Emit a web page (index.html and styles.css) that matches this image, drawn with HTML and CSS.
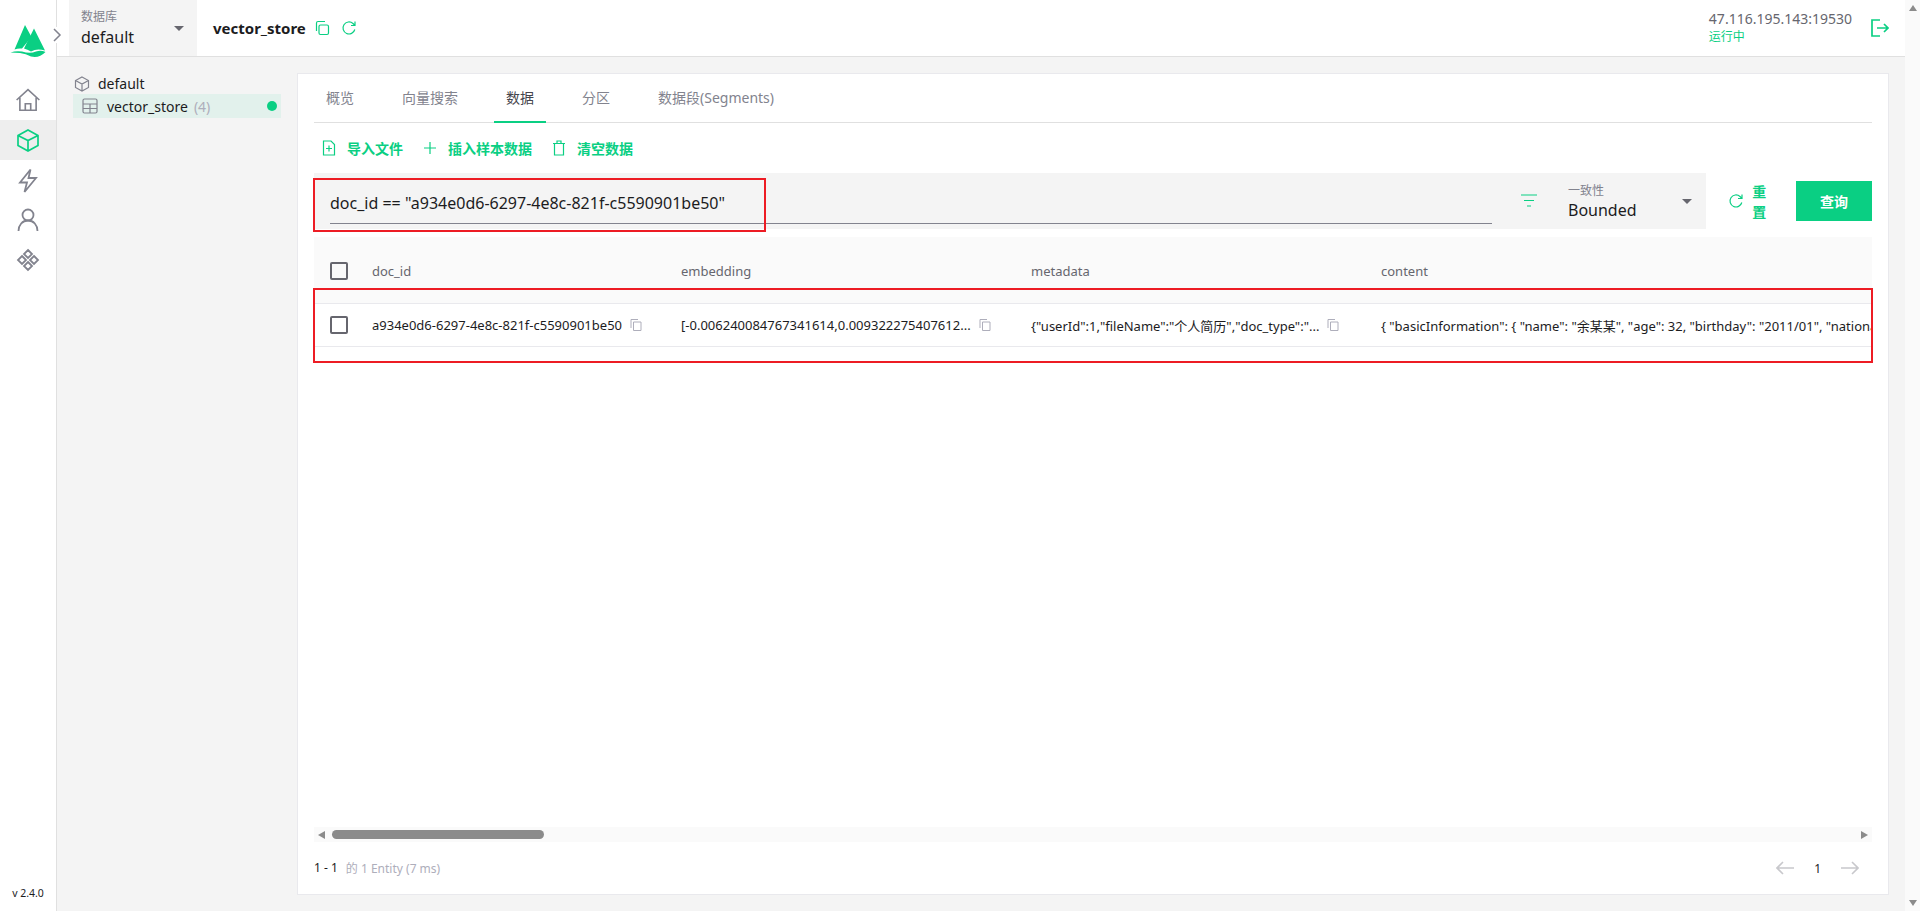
FILE: index.html
```html
<!DOCTYPE html>
<html lang="zh">
<head>
<meta charset="utf-8">
<title>Attu</title>
<link rel="stylesheet" href="styles.css">
</head>
<body>
<div class="app">
  <nav class="nav">
    <svg class="logo" viewBox="0 0 46 36" width="46" height="36"><path fill="#0acf83" d="M15 1 L21.5 13 L12 24.5 Q8 24 4.5 25.5 Z"/><path fill="#0acf83" d="M24 4.5 L35 26.5 Q27 24 21 27.5 Q17.5 25.5 14 24.5 Z"/><path fill="#0acf83" d="M0.5 28.5 Q6 26.5 12 27.5 Q20 30 26 27.5 Q31 26 35.5 28 Q29 34.5 21 32.5 Q16 29.5 10 29 Q5 28.5 0.5 28.5 Z"/></svg>
    <div class="nav-item"><svg viewBox="0 0 24 24" width="26" height="26" class="ic-grey"><path d="M1.5 12 12 2.5 22.5 12M4.5 10v11.5h15V10M9.5 21.5v-6h5v6"/></svg></div>
    <div class="nav-item active"><svg viewBox="0 0 24 24" width="24" height="24" class="ic-green"><path d="M12 2 22 7.5v10L12 23 2 17.500v-10zM2 7.500l10 5 10-5M12 12.500V23"/></svg></div>
    <div class="nav-item"><svg viewBox="0 0 24 24" width="24" height="26" class="ic-slate"><path d="M14.500 1.500 4 14.500h7L8.500 24 20 10h-7.500z"/></svg></div>
    <div class="nav-item"><svg viewBox="0 0 24 24" width="24" height="24" class="ic-slate"><circle cx="12" cy="7" r="5.500"/><path d="M2.500 23c0-6 4-10.500 9.500-10.500S21.500 17 21.500 23"/></svg></div>
    <div class="nav-item"><svg viewBox="0 0 24 24" width="24" height="24" class="ic-slate"><path d="M12 2l4 4-4 4-4-4zM6 8l4 4-4 4-4-4zM18 8l4 4-4 4-4-4zM12 14l4 4-4 4-4-4z"/></svg></div>
    <div class="version">v 2.4.0</div>
    <svg class="nav-toggle" viewBox="0 0 10 16" width="10" height="16"><path d="M2 2l6 6-6 6"/></svg>
  </nav>
  <div class="main">
    <header class="header">
      <div class="db-select">
        <span class="small-label">数据库</span>
        <span class="db-value">default</span>
        <i class="caret db-caret"></i>
      </div>
      <div class="coll-title">vector_store</div>
      <svg class="ic-green thin head-ic" viewBox="0 0 16 16" width="16" height="16"><rect x="5" y="5" width="9.500" height="9.500" rx="1.500"/><path d="M2.500 11V3a1.500 1.500 0 0 1 1.500-1.500h7"/></svg>
      <svg class="ic-green thin head-ic" viewBox="0 0 16 16" width="16" height="16"><path d="M13.800 9.500A6 6 0 1 1 12 3.500L14 5.500M14 1.500v4h-4"/></svg>
      <div class="conn">
        <span class="conn-addr">47.116.195.143:19530</span>
        <span class="conn-state">运行中</span>
      </div>
      <svg class="ic-green exit" viewBox="0 0 18 18" width="18" height="18"><path d="M9 1H1v16h8M6 9h11M13 5l4 4-4 4"/></svg>
    </header>
    <div class="body">
      <aside class="tree">
        <div class="tree-db">
          <svg class="ic-grey thin" viewBox="0 0 16 16" width="16" height="16"><path d="M8 1l6.500 3.500v7L8 15l-6.500-3.500v-7zM1.500 4.500 8 8l6.500-3.500M8 8v7"/></svg>
          <span>default</span>
        </div>
        <div class="tree-coll">
          <svg class="ic-grey thin" viewBox="0 0 16 16" width="16" height="16"><rect x="1" y="1" width="14" height="14" rx="1.500"/><path d="M1 6h14M1 10.500h14M8 6v9"/></svg>
          <span class="tree-name">vector_store</span>
          <span class="tree-count">(4)</span>
          <i class="dot"></i>
        </div>
      </aside>
      <section class="card">
        <div class="tabs">
          <div class="tab">概览</div>
          <div class="tab">向量搜索</div>
          <div class="tab current">数据</div>
          <div class="tab">分区</div>
          <div class="tab">数据段(Segments)</div>
        </div>
        <div class="toolbar">
          <div class="tool"><svg class="ic-green thin" viewBox="0 0 14 16" width="14" height="16"><path d="M1.500 1h7.500l3.500 3.500V15h-11zM7 5.500v6M4 8.500h6"/></svg><span>导入文件</span></div>
          <div class="tool"><svg class="ic-green thin" viewBox="0 0 14 14" width="14" height="14"><path d="M7 1v12M1 7h12"/></svg><span>插入样本数据</span></div>
          <div class="tool"><svg class="ic-green thin" viewBox="0 0 14 16" width="14" height="16"><path d="M2.500 3.500V15h9V3.500M1 3.500h12M5 3.500V1h4v2.500"/></svg><span>清空数据</span></div>
        </div>
        <div class="query">
          <div class="query-bar">
            <div class="query-input">doc_id == "a934e0d6-6297-4e8c-821f-c5590901be50"</div>
            <svg class="ic-green thin filter" viewBox="0 0 16 14" width="16" height="14"><path d="M0 1h16M3 6.500h10M6 12h4"/></svg>
            <div class="consistency">
              <span class="small-label">一致性</span>
              <span class="consistency-value">Bounded</span>
              <i class="caret cons-caret"></i>
            </div>
          </div>
          <div class="reset"><svg class="ic-green thin" viewBox="0 0 16 16" width="16" height="16"><path d="M13.800 9.500A6 6 0 1 1 12 3.500L14 5.500M14 1.500v4h-4"/></svg><span>重置</span></div>
          <button class="search">查询</button>
        </div>
        <div class="table">
          <div class="tr thead">
            <div class="td"><i class="check"></i></div>
            <div class="td">doc_id</div>
            <div class="td">embedding</div>
            <div class="td">metadata</div>
            <div class="td">content</div>
          </div>
          <div class="tr row">
            <div class="td"><i class="check"></i></div>
            <div class="td"><span>a934e0d6-6297-4e8c-821f-c5590901be50</span><svg class="copy" viewBox="0 0 12 12" width="12" height="12"><path d="M3.500 3h7.500v8.500H3.500zM1 9V.5h7"/></svg></div>
            <div class="td"><span>[-0.006240084767341614,0.009322275407612...</span><svg class="copy" viewBox="0 0 12 12" width="12" height="12"><path d="M3.500 3h7.500v8.500H3.500zM1 9V.5h7"/></svg></div>
            <div class="td"><span>{"userId":1,"fileName":"个人简历","doc_type":"...</span><svg class="copy" viewBox="0 0 12 12" width="12" height="12"><path d="M3.500 3h7.500v8.500H3.500zM1 9V.5h7"/></svg></div>
            <div class="td"><span>{ "basicInformation": { "name": "余某某", "age": 32, "birthday": "2011/01", "nationality": "中国", "city": "北京" } }</span></div>
          </div>
        </div>
        <div class="hscroll">
          <i class="tri tri-left"></i>
          <div class="hscroll-rail"><div class="hscroll-thumb"></div></div>
          <i class="tri tri-right"></i>
        </div>
        <footer class="foot">
          <div class="foot-info"><b>1 - 1</b><span>的 1 Entity (7 ms)</span></div>
          <div class="pager">
            <svg class="ic-pale" viewBox="0 0 18 14" width="18" height="14"><path d="M18 7H1M7 1 1 7l6 6"/></svg>
            <span class="page-no">1</span>
            <svg class="ic-pale" viewBox="0 0 18 14" width="18" height="14"><path d="M0 7h17M11 1l6 6-6 6"/></svg>
          </div>
        </footer>
        <div class="mark mark-query"></div>
        <div class="mark mark-row"></div>
      </section>
    </div>
  </div>
  <div class="vscroll"><i class="tri tri-up"></i><i class="tri tri-down"></i></div>
</div>
</body>
</html>
```
FILE: styles.css
```css
* { box-sizing: border-box; }
html, body { margin: 0; height: 100%; overflow: hidden; }
body { font-family: "Noto Sans", "Noto Sans CJK SC", sans-serif; font-size: 14px; color: #1c1c1e; background: #fff; }
svg { fill: none; stroke-width: 1.5; flex: none; display: block; }
.ic-grey { stroke: #82838e; }
.ic-slate { stroke: #82838e; stroke-width: 1.8; }
.ic-green { stroke: #0acf83; stroke-width: 1.7; }
.ic-green.thin, .ic-grey.thin { stroke-width: 1.2; }
.ic-pale { stroke: #c8c8cc; stroke-width: 1.6; }

.app { display: flex; height: 911px; }
.nav { width: 57px; flex: none; border-right: 1px solid #e0e0e0; display: flex; flex-direction: column; position: relative; background: #fff; }
.logo { margin: 24px 0 20px 10px; }
.logo path { stroke: none; }
.nav-item { height: 40px; display: flex; align-items: center; justify-content: center; }
.nav-item.active { background: #eee; }
.version { margin-top: auto; margin-bottom: 11px; text-align: center; font-size: 10.5px; }
.nav-toggle { position: absolute; left: 52px; top: 27px; stroke: #82838e; background: #fff; width: 10px; height: 16px; }

.main { flex: 1; min-width: 0; display: flex; flex-direction: column; background: #f4f4f4; }
.header { height: 57px; flex: none; display: flex; align-items: center; background: #fff; border-bottom: 1px solid #e0e0e0; padding-left: 12px; }
.db-select { width: 128px; height: 56px; background: #f4f4f4; padding: 9px 12px 0; display: flex; flex-direction: column; position: relative; }
.small-label { font-size: 12px; line-height: 15px; color: #82838e; }
.db-value { font-size: 16px; line-height: 24px; margin-top: 1px; }
.caret { position: absolute; width: 0; height: 0; border-left: 5px solid transparent; border-right: 5px solid transparent; border-top: 5px solid #66666e; }
.db-caret { right: 13px; top: 26px; }
.coll-title { font-weight: 700; font-size: 15px; margin-left: 16px; margin-right: 8px; }
.head-ic { margin-right: 11px; }
.conn { margin-left: auto; display: flex; flex-direction: column; }
.conn-addr { font-size: 14px; line-height: 18px; color: #66666e; }
.conn-state { font-size: 12px; line-height: 18px; color: #0acf83; }
.exit { margin: 0 16px 0 19px; }

.body { flex: 1; min-height: 0; display: flex; gap: 16px; padding: 16px; }
.tree { width: 208px; flex: none; }
.tree-db { display: flex; align-items: center; gap: 8px; height: 21px; font-size: 14px; }
.tree-db { margin-left: 1px; }
.tree-coll { height: 24px; display: flex; align-items: center; background: #e2f1ec; padding-left: 9px; font-size: 14px; }
.tree-name { margin-left: 9px; }
.tree-count { margin-left: 6px; color: #aeaebb; }
.dot { width: 10px; height: 10px; border-radius: 50%; background: #0acf83; margin-left: auto; margin-right: 4px; }

.card { flex: 1; min-width: 0; background: #fff; border: 1px solid #e9e9ed; padding: 0 16px; display: flex; flex-direction: column; position: relative; }
.tabs { height: 49px; flex: none; display: flex; gap: 24px; border-bottom: 1px solid #e0e0e0; }
.tab { padding: 0 12px; line-height: 48px; height: 49px; color: #82838e; font-size: 14px; white-space: nowrap; }
.tab.current { color: #45454d; border-bottom: 2px solid #0acf83; }
.toolbar { height: 50px; flex: none; display: flex; align-items: center; gap: 20px; padding-left: 8px; }
.tool { display: flex; align-items: center; gap: 11px; color: #0acf83; font-weight: 700; font-size: 14px; }
.query { height: 56px; flex: none; display: flex; align-items: center; }
.query-bar { width: 1394px; height: 56px; background: #f4f4f4; display: flex; align-items: flex-end; position: relative; padding-left: 16px; }
.query-input { width: 1162px; height: 36px; line-height: 30px; border-bottom: 1px solid #82838e; font-size: 16px; margin-bottom: 5px; }
.filter { margin: 0 0 21px 29px; }
.consistency { display: flex; flex-direction: column; margin: 0 0 7px 31px; }
.consistency-value { font-size: 16px; line-height: 24px; }
.cons-caret { right: 14px; top: 26px; }
.reset { display: flex; align-items: center; gap: 8px; margin-left: 22px; color: #0acf83; font-weight: 700; font-size: 14px; }
.search { margin-left: 16px; width: 76px; height: 40px; background: #0acf83; color: #fff; border: 0; font: inherit; font-weight: 700; }
.table { margin-top: 8px; flex: 1; min-height: 0; overflow: hidden; font-size: 13px; }
.tr { display: grid; grid-template-columns: 58px 309px 350px 350px 1fr; align-items: center; }
.td { display: flex; align-items: center; min-width: 0; white-space: nowrap; overflow: hidden; }
.thead { height: 66px; background: #fafafa; color: #66666e; padding-top: 2px; }
.row { height: 44px; border-top: 1px solid #e9e9ed; border-bottom: 1px solid #e9e9ed; color: #1c1c1e; }
.td span { flex: none; }
.check { display: block; width: 18px; height: 18px; margin-left: 16px; border: 2px solid #66666e; border-radius: 2px; }
.copy { stroke: #aeaebb; stroke-width: 1; margin-left: 8px; }
.hscroll { height: 15px; flex: none; background: #fafafa; display: flex; align-items: center; padding: 0 4px; }
.hscroll-rail { flex: 1; padding: 0 0 0 7px; }
.hscroll-thumb { width: 212px; height: 9px; border-radius: 5px; background: #8b8b8b; }
.tri { display: block; width: 0; height: 0; flex: none; border: 4px solid transparent; }
.tri-left { border-left: 0; border-right: 7px solid #8b8b8b; }
.tri-right { border-right: 0; border-left: 7px solid #8b8b8b; }
.foot { height: 52px; flex: none; display: flex; align-items: center; justify-content: space-between; font-size: 12px; }
.foot-info { display: flex; gap: 8px; }
.foot-info b { font-weight: 400; }
.foot-info span { color: #aeaebb; }
.pager { display: flex; align-items: center; gap: 20px; padding-right: 13px; font-size: 12px; }
.mark { position: absolute; border: 2px solid #ed1c24; pointer-events: none; }
.mark-query { left: 15px; top: 104px; width: 453px; height: 54px; }
.mark-row { left: 15px; top: 214px; right: 15px; height: 75px; }

.vscroll { width: 15px; flex: none; background: #fafafa; display: flex; flex-direction: column; justify-content: space-between; align-items: center; padding: 5px 0; }
.tri-up { border-top: 0; border-bottom: 6px solid #8b8b8b; }
.tri-down { border-bottom: 0; border-top: 6px solid #8b8b8b; }
```
